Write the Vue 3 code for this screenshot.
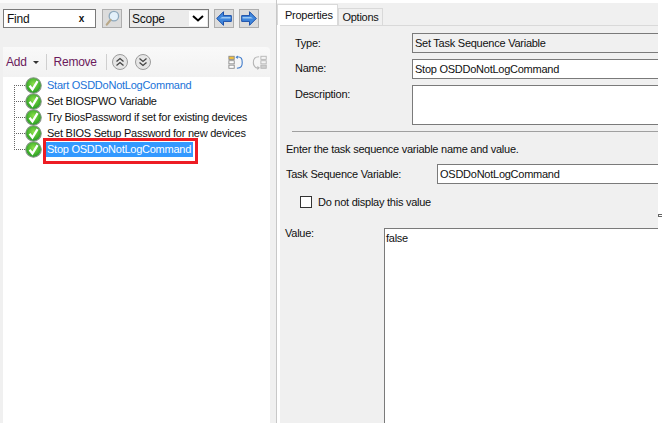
<script setup>
const steps = [
  { label: 'Start OSDDoNotLogCommand', kind: 'link' },
  { label: 'Set BIOSPWO Variable', kind: '' },
  { label: 'Try BiosPassword if set for existing devices', kind: '' },
  { label: 'Set BIOS Setup Password for new devices', kind: '' },
  { label: 'Stop OSDDoNotLogCommand', kind: 'sel' }
]
</script>

<template>
  <div class="app">
    <section class="left">
      <div class="search">
        <div class="find"><span>Find</span><b>x</b></div>
        <div class="sq mag">
          <svg width="16" height="17" viewBox="0 0 16 18"><circle cx="10" cy="6.500" r="5" fill="#e3f0fa" stroke="#8fa9bd" stroke-width="1.400"/><path d="M6.500 10.500 2.500 15.500" stroke="#b9a888" stroke-width="2.400" stroke-linecap="round"/></svg>
        </div>
        <div class="scope"><span class="scope-t">Scope</span><span class="caret"><svg width="12" height="7" viewBox="0 0 12 7"><path d="M1 1l5 4.500L11 1" fill="none" stroke="#000" stroke-width="2"/></svg></span></div>
        <div class="sq arrow">
          <svg width="16" height="15" viewBox="0 0 16 15"><path d="M7.500.7.700 7.500l6.800 6.800V10.400h7.800V4.600H7.500z" fill="#3f86dc" stroke="#1b4fa8"/><path d="M6 6h8.500v1.500H4z" fill="#9cc8f2"/></svg>
        </div>
        <div class="sq arrow">
          <svg width="16" height="15" viewBox="0 0 16 15"><path d="M8.500.7l6.800 6.800-6.800 6.800V10.400H.7V4.600h7.800z" fill="#3f86dc" stroke="#1b4fa8"/><path d="M1.500 6H10l2 1.500H1.500z" fill="#9cc8f2"/></svg>
        </div>
      </div>
      <div class="toolbar">
        <span class="tool">Add</span>
        <span class="drop"></span>
        <span class="sep"></span>
        <span class="tool">Remove</span>
        <span class="sep two"></span>
        <span class="round"><svg width="10" height="10" viewBox="0 0 10 10"><path d="M1.500 4.500 5 1.500l3.500 3M1.500 8.500 5 5.500l3.500 3" fill="none" stroke="#444" stroke-width="1.300"/></svg></span>
        <span class="round"><svg width="10" height="10" viewBox="0 0 10 10"><path d="M1.500 1.500 5 4.500l3.500-3M1.500 5.500 5 8.500l3.500-3" fill="none" stroke="#444" stroke-width="1.300"/></svg></span>
        <span class="grow"></span>
        <svg class="ti" width="16" height="15" viewBox="0 0 18 16"><rect x="1" y="1" width="6" height="3.500" fill="#f0c040" stroke="#8a8a8a"/><rect x="1" y="6" width="6" height="3.500" fill="#fff" stroke="#8a8a8a"/><rect x="1" y="11" width="6" height="3.500" fill="#fff" stroke="#8a8a8a"/><path d="M10 1.500c5 0 6 2 6 6.500s-1 6-6 6.500" fill="none" stroke="#3b78c9" stroke-width="1.200"/><path d="M11 0v4L8.500 2z" fill="#3b78c9"/></svg>
        <svg class="ti last" width="16" height="15" viewBox="0 0 18 16"><rect x="10" y="1" width="6" height="3.500" fill="#f4f4f4" stroke="#b5b5b5"/><rect x="10" y="6" width="6" height="3.500" fill="#f4f4f4" stroke="#b5b5b5"/><rect x="10" y="11" width="6" height="3.500" fill="#cfcfcf" stroke="#b5b5b5"/><path d="M8 1.500C3 1.500 1.500 4 1.500 8s1.500 6 5.500 6.500" fill="none" stroke="#b5b5b5" stroke-width="1.200"/><path d="M6 12v4.500L9 14z" fill="#b5b5b5"/></svg>
      </div>
      <div class="tree">
        <div class="rows">
          <div v-for="s in steps" :key="s.label" class="row">
            <span class="dash"></span>
            <svg class="chk" width="17" height="17" viewBox="0 0 16 16">
              <defs><radialGradient id="g" cx="50%" cy="40%" r="60%"><stop offset="0" stop-color="#8ce04a"/><stop offset="1" stop-color="#1f9a1f"/></radialGradient></defs>
              <circle cx="8" cy="8" r="7.300" fill="url(#g)" stroke="#8a968a"/>
              <path d="M4.300 8.300 7 11.800 11.800 3.800" fill="none" stroke="#fff" stroke-width="2.200"/>
            </svg>
            <span class="lab" :class="s.kind">{{ s.label }}
              <i v-if="s.kind === 'sel'" class="mark"></i>
            </span>
          </div>
        </div>
      </div>
    </section>

    <div class="split"></div>

    <section class="right">
      <div class="tabs">
        <span class="tab on">Properties</span>
        <span class="tab">Options</span>
      </div>
      <div class="form">
        <div class="f type"><label>Type:</label><div class="box grey">Set Task Sequence Variable</div></div>
        <div class="f name"><label>Name:</label><div class="box">Stop OSDDoNotLogCommand</div></div>
        <div class="f desc"><label>Description:</label><div class="box tall"></div></div>
        <hr />
        <p class="intro">Enter the task sequence variable name and value.</p>
        <div class="f tsv"><label>Task Sequence Variable:</label><div class="box">OSDDoNotLogCommand</div></div>
        <div class="cb"><span class="check"></span>Do not display this value</div>
        <div class="f val"><label>Value:</label><div class="box area">false</div></div>
      </div>
      <i class="grip"></i>
    </section>
  </div>
</template>

<style>
html, body { margin: 0; background: #f0f0f0; }
</style>

<style scoped>
.app { width: 662px; height: 423px; overflow: hidden; display: flex; background: #f0f0f0; font: 11px/14px "Liberation Sans", Arial, sans-serif; letter-spacing: -0.25px; color: #111; }
.left { width: 276px; flex: none; display: flex; flex-direction: column; padding-left: 3px; box-sizing: border-box; border-top: 3px solid #fbfbfb; }
.search { display: flex; align-items: flex-start; padding-top: 6px; height: 38px; }
.find { height: 17px; border: 1px solid #7a7a7a; background: #fff; display: flex; justify-content: space-between; align-items: center; padding: 0 11px 0 3px; width: 77px; font-size: 12px; }
.find b { font-size: 10px; }
.sq { width: 18px; height: 17px; border: 1px solid #aeaeae; background: #dcdcdc; display: flex; align-items: center; justify-content: center; }
.mag { margin-left: 6px; }
.scope { margin-left: 7px; width: 78px; height: 17px; border: 1px solid #7a7a7a; background: #ebebeb; display: flex; justify-content: space-between; }
.scope-t { padding: 2px 0 0 2px; font-size: 12px; }
.caret { width: 18px; background: #fff; display: flex; align-items: center; justify-content: center; margin: 1px; }
.arrow { margin-left: 5px; }
.toolbar { height: 30px; width: 267px; display: flex; align-items: center; padding-left: 3px; box-sizing: border-box; background: linear-gradient(#f9f9f9, #f2f2f2); border-top-right-radius: 4px; }
.tool { color: #6b1a5c; font-size: 12px; }
.drop { margin-left: 6px; border: 3.500px solid transparent; border-top: 3.500px solid #333; border-bottom: 0; }
.sep { width: 1px; height: 16px; background: #cfcfcf; margin: 0 7px; }
.sep.two { margin: 0 5px 0 9px; }
.round { width: 16px; height: 16px; box-sizing: border-box; border-radius: 50%; border: 1px solid #9c9c9c; background: #e6e6e6; display: flex; align-items: center; justify-content: center; margin-right: 7px; }
.grow { flex: 1; }
.ti { margin-right: 8px; }
.ti.last { margin-right: 2px; }
.tree { width: 267px; flex: 1; background: #fff; }
.rows { position: relative; margin-left: 11px; }
.rows::before { content: ""; position: absolute; left: 0; top: 8px; height: 65px; border-left: 1px dotted #666; }
.row { height: 16px; display: flex; align-items: center; position: relative; }
.dash { width: 11px; border-top: 1px dotted #666; flex: none; }
.chk { flex: none; }
.lab { margin-left: 3px; padding: 0 2px; position: relative; white-space: nowrap; line-height: 15px; }
.lab.link { color: #1a73d8; }
.lab.sel { background: #3399ff; color: #fff; }
.mark { position: absolute; left: -2px; right: -5px; top: -4px; bottom: -7px; border: 3px solid #ed1c24; }
.split { width: 1px; flex: none; background: #c8c8c8; }
.right { flex: 1; position: relative; background: #fff; padding: 3px 4px 0 3px; min-width: 0; }
.tabs { display: flex; align-items: flex-end; height: 22px; margin-left: -3px; background: #f0f0f0; }
.tab { height: 17px; width: 45px; text-align: center; line-height: 16px; background: #f0f0f0; border: 1px solid #d9d9d9; border-bottom: 0; box-sizing: border-box; }
.tab.on { height: 21px; width: 61px; background: #fff; line-height: 20px; text-align: left; padding-left: 7px; }
.form { height: 400px; background: #f0f0f0; border-top: 1px solid #d9d9d9; position: relative; display: flex; flex-direction: column; }
.f { display: flex; }
.f label { flex: none; }
.box { flex: 1; border: 1px solid #7a7a7a; border-right: 0; background: #fff; box-sizing: border-box; height: 20px; line-height: 18px; padding-left: 2px; min-width: 0; }
.box.grey { background: #f0f0f0; }
.box.tall { height: 40px; }
.type, .name, .desc { padding-left: 15px; }
.type label { width: 117px; padding-top: 3px; }
.name label, .desc label { width: 117px; padding-top: 2px; }
.type { margin-top: 7px; }
.name, .desc { margin-top: 6px; }
hr { border: 0; height: 1px; background: #a0a0a0; margin: 6px 0 0 12px; width: 366px; }
.intro { margin: 10px 0 0 6px; }
.tsv { margin-top: 8px; padding-left: 6px; }
.tsv label { width: 151px; padding-top: 3px; }
.cb { display: flex; align-items: center; margin: 12px 0 0 20px; height: 12px; }
.check { width: 12px; height: 12px; box-sizing: border-box; border: 1px solid #333; background: #fff; margin-right: 6px; }
.val { margin-top: 20px; padding-left: 5px; flex: 1; min-height: 0; }
.val label { width: 99px; margin-top: -2px; }
.box.area { height: auto; line-height: 18px; padding-left: 1px; }
.grip { position: absolute; right: 0; top: 214px; width: 4px; height: 3px; border: 1px solid #666; box-sizing: border-box; border-right: 0; }
</style>
